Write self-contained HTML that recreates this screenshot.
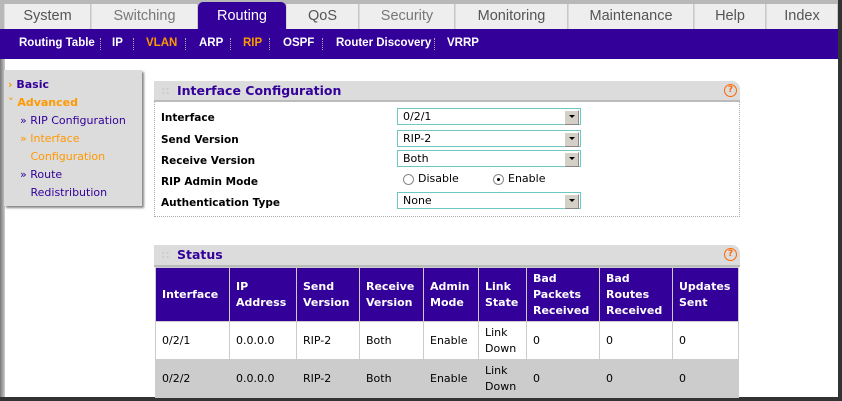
<!DOCTYPE html>
<html><head><style>
*{margin:0;padding:0;box-sizing:border-box}
body{width:842px;height:401px;overflow:hidden;background:#fff;position:relative;font-family:"DejaVu Sans",Verdana,sans-serif;font-size:11px}
.a{position:absolute}
.tab{position:absolute;top:4px;height:25px;background:#eeeeee;border-left:1px solid #d8d8d8;border-right:1px solid #c8c8c8;color:#777;font-family:"Liberation Sans",sans-serif;font-size:14.5px;text-align:center;line-height:24px}
.sub{position:absolute;top:37px;color:#fff;font-weight:bold;font-family:"Liberation Sans",sans-serif;font-size:11.5px}
.sep{position:absolute;top:38px;height:12px;border-left:1px dotted #aaa}
.lbl{position:absolute;left:161px;font-weight:bold;font-size:10.5px;color:#000}
.sel{position:absolute;left:397px;width:184px;height:17px;border:1px solid #6cc8c0;background:#fff;font-size:11px;padding-left:5px;line-height:15px}
.sel:after{content:"";position:absolute;right:1px;top:1px;width:13px;height:13px;background:#d4d0c8;border:1px solid #888;border-top-color:#fff;border-left-color:#fff}
.sel:before{content:"";position:absolute;right:5px;top:6px;border:3px solid transparent;border-top:3px solid #000;z-index:2}
table{position:absolute;left:155px;top:267px;width:584px;border-collapse:collapse}
th{background:#330099;color:#fff;font-size:11px;text-align:left;padding:0 6px;border:1px solid #ccc;height:54px;line-height:16px}
td{font-size:11px;padding:0 6px;border:1px solid #ccc;line-height:16px;color:#000}
</style></head><body>
<div class="a" style="left:0;top:0;width:842px;height:30px;background:#b8b8b8"></div>
<div class="tab" style="left:4px;width:87px;color:#555">System</div>
<div class="tab" style="left:91px;width:107px">Switching</div>
<div class="tab" style="left:198px;width:88px;background:#330099;color:#fff;border-radius:5px 5px 0 0;top:2px;height:28px;line-height:28px;border:none">Routing</div>
<div class="tab" style="left:286px;width:73px;color:#555">QoS</div>
<div class="tab" style="left:359px;width:96px">Security</div>
<div class="tab" style="left:455px;width:113px;color:#555">Monitoring</div>
<div class="tab" style="left:568px;width:126px;color:#555">Maintenance</div>
<div class="tab" style="left:694px;width:72px;color:#555">Help</div>
<div class="tab" style="left:766px;width:72px;color:#555">Index</div>
<div class="a" style="left:0;top:29px;width:842px;height:30px;background:#330099"></div>
<div class="sub" style="left:19px">Routing Table</div><div class="sep" style="left:100px"></div>
<div class="sub" style="left:112px">IP</div><div class="sep" style="left:133px"></div>
<div class="sub" style="left:146px;color:#f90">VLAN</div><div class="sep" style="left:185px"></div>
<div class="sub" style="left:199px">ARP</div><div class="sep" style="left:230px"></div>
<div class="sub" style="left:243px;color:#f90">RIP</div><div class="sep" style="left:269px"></div>
<div class="sub" style="left:283px">OSPF</div><div class="sep" style="left:322px"></div>
<div class="sub" style="left:336px">Router Discovery</div><div class="sep" style="left:434px"></div>
<div class="sub" style="left:447px">VRRP</div>
<div class="a" style="left:0;top:59px;width:5px;height:342px;background:linear-gradient(90deg,#777,#ccc)"></div>
<div class="a" style="left:838px;top:0;width:4px;height:401px;background:#333"></div>
<div class="a" style="left:0;top:397px;width:842px;height:4px;background:#333"></div>
<div class="a" style="left:4px;top:70px;width:138px;height:136px;background:#dcdcdc;box-shadow:2px 2px 2px #888;font-size:11px;line-height:18px;padding-top:6px">
<div style="padding-left:4px;color:#330099;font-weight:bold"><span style="color:#f90">›</span> Basic</div>
<div style="padding-left:4px;color:#f90;font-weight:bold">˅ Advanced</div>
<div style="padding-left:16px;color:#330099">» RIP Configuration</div>
<div style="padding-left:16px;color:#f90">» Interface<br>&nbsp;&nbsp;&nbsp;Configuration</div>
<div style="padding-left:16px;color:#330099">» Route<br>&nbsp;&nbsp;&nbsp;Redistribution</div>
</div>
<div class="a" style="left:154px;top:81px;width:586px;height:21px;background:#dcdcdc;border-radius:0 8px 0 0;border-bottom:2px solid #bbb"></div>
<div class="a" style="left:161px;top:84px;color:#ccc;font-weight:bold">::</div>
<div class="a" style="left:177px;top:83px;color:#330099;font-weight:bold;font-size:12.5px">Interface Configuration</div>
<div class="a" style="left:724px;top:84px;width:13px;height:13px;border:1.5px solid #f60;border-radius:50%;color:#f60;font-size:9px;text-align:center;line-height:10px;font-weight:bold">?</div>
<div class="a" style="left:154px;top:102px;width:586px;height:115px;border:1px dotted #aaa;border-top:none"></div>
<div class="lbl" style="top:112px">Interface</div>
<div class="lbl" style="top:134px">Send Version</div>
<div class="lbl" style="top:155px">Receive Version</div>
<div class="lbl" style="top:176px">RIP Admin Mode</div>
<div class="lbl" style="top:197px">Authentication Type</div>
<div class="sel" style="top:108px">0/2/1</div>
<div class="sel" style="top:130px">RIP-2</div>
<div class="sel" style="top:150px">Both</div>
<div class="a" style="left:403px;top:174px;width:11px;height:11px;border:1px solid #888;border-radius:50%;background:#fff"></div>
<div class="a" style="left:418px;top:172px;font-size:11px">Disable</div>
<div class="a" style="left:493px;top:174px;width:11px;height:11px;border:1px solid #888;border-radius:50%;background:#fff"><div style="margin:3px;width:3px;height:3px;background:#000;border-radius:50%"></div></div>
<div class="a" style="left:508px;top:172px;font-size:11px">Enable</div>
<div class="sel" style="top:192px">None</div>
<div class="a" style="left:154px;top:245px;width:586px;height:22px;background:#dcdcdc;border-radius:0 8px 0 0;border-bottom:2px solid #bbb"></div>
<div class="a" style="left:161px;top:248px;color:#ccc;font-weight:bold">::</div>
<div class="a" style="left:177px;top:247px;color:#330099;font-weight:bold;font-size:12.5px">Status</div>
<div class="a" style="left:724px;top:248px;width:13px;height:13px;border:1.5px solid #f60;border-radius:50%;color:#f60;font-size:9px;text-align:center;line-height:10px;font-weight:bold">?</div>
<table>
<tr><th style="width:74px">Interface</th><th style="width:67px">IP<br>Address</th><th style="width:63px">Send<br>Version</th><th style="width:64px">Receive<br>Version</th><th style="width:55px">Admin<br>Mode</th><th style="width:48px">Link<br>State</th><th style="width:73px">Bad<br>Packets<br>Received</th><th style="width:73px">Bad<br>Routes<br>Received</th><th>Updates<br>Sent</th></tr>
<tr style="height:38px"><td>0/2/1</td><td>0.0.0.0</td><td>RIP-2</td><td>Both</td><td>Enable</td><td>Link<br>Down</td><td>0</td><td>0</td><td>0</td></tr>
<tr style="height:38px;background:#ccc"><td>0/2/2</td><td>0.0.0.0</td><td>RIP-2</td><td>Both</td><td>Enable</td><td>Link<br>Down</td><td>0</td><td>0</td><td>0</td></tr>
</table>
</body></html>
